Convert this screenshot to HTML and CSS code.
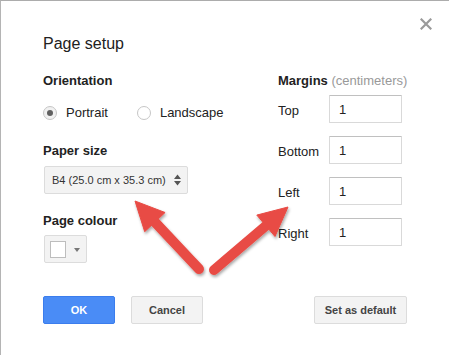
FILE: index.html
```html
<!DOCTYPE html>
<html lang="en">
<head>
    <meta charset="UTF-8">
    <meta name="viewport" content="width=device-width, initial-scale=1.0">
    <title>Page setup</title>
    <link rel="stylesheet" href="styles.css">
</head>
<body>
    <div class="dialog">
        <div class="dialog-header">
            <h1 class="dialog-title">Page setup</h1>
            <button class="close" aria-label="Close">
                <svg width="12" height="12" viewBox="0 0 12 12">
                    <path d="M1.5 1.5 L10.5 10.5 M10.5 1.5 L1.5 10.5" stroke="#9a9a9a" stroke-width="2.2" stroke-linecap="square"/>
                </svg>
            </button>
        </div>

        <div class="dialog-body">
            <div class="col-left">
                <div class="section-label">Orientation</div>
                <div class="radio-row">
                    <label class="radio portrait"><span class="radio-circle checked"></span>Portrait</label>
                    <label class="radio"><span class="radio-circle"></span>Landscape</label>
                </div>

                <div class="section-label paper-label">Paper size</div>
                <div class="select">
                    <span>B4 (25.0 cm x 35.3 cm)</span>
                    <svg width="7" height="12" viewBox="0 0 7 12">
                        <path d="M0 5 L3.5 0.5 L7 5 Z M0 7 L3.5 11.5 L7 7 Z" fill="#555"/>
                    </svg>
                </div>

                <div class="section-label colour-label">Page colour</div>
                <div class="colour-btn">
                    <span class="swatch"></span>
                    <span class="caret"></span>
                </div>
            </div>

            <div class="col-right">
                <div class="section-label">Margins <span class="unit">(centimeters)</span></div>
                <div class="margin-row"><span class="margin-name">Top</span><input type="text" value="1"></div>
                <div class="margin-row"><span class="margin-name">Bottom</span><input type="text" value="1"></div>
                <div class="margin-row"><span class="margin-name">Left</span><input type="text" value="1"></div>
                <div class="margin-row"><span class="margin-name">Right</span><input type="text" value="1"></div>
            </div>
        </div>

        <div class="dialog-footer">
            <button class="btn btn-primary">OK</button>
            <button class="btn btn-cancel">Cancel</button>
            <button class="btn btn-default">Set as default</button>
        </div>

        <!-- annotation arrows drawn over the dialog -->
        <svg class="arrows" width="449" height="355" viewBox="0 0 449 355">
            <defs>
                <filter id="shadow" x="-20%" y="-20%" width="150%" height="150%">
                    <feDropShadow dx="1" dy="2" stdDeviation="1.6" flood-color="#000" flood-opacity="0.35"/>
                </filter>
            </defs>
            <g fill="#e84c45" stroke="#e84c45" filter="url(#shadow)">
                <line x1="152" y1="219" x2="199" y2="269" stroke-width="10" stroke-linecap="round"/>
                <polygon points="135,201 144.7,231.7 165.1,212.5" stroke-width="1" stroke-linejoin="round"/>
                <line x1="268" y1="224" x2="214" y2="270" stroke-width="10" stroke-linecap="round"/>
                <polygon points="288,207 275,236.5 256.8,215.1" stroke-width="1" stroke-linejoin="round"/>
            </g>
        </svg>
    </div>
</body>
</html>
```

FILE: styles.css
```css
body {
    margin: 0;
    background-color: #fff;
    font-family: 'Liberation Sans', Arial, sans-serif;
    color: #222;
}
.dialog {
    position: relative;
    height: 354px;
    padding: 0 17px 0 42px;
    border-top: 1px solid #acacac;
    border-left: 1px solid #b4b4b4;
    overflow: hidden;
}
.dialog-header {
    display: flex;
    justify-content: space-between;
    align-items: flex-start;
}
.dialog-title {
    margin: 33px 0 0;
    font-size: 16px;
    font-weight: normal;
    line-height: 20px;
    color: #212121;
}
.close {
    margin-top: 17px;
    padding: 0;
    border: none;
    background: none;
    width: 12px;
    height: 12px;
    line-height: 0;
    cursor: pointer;
}
.dialog-body {
    display: grid;
    grid-template-columns: 235px 1fr;
    margin-top: 19px;
}
.section-label {
    font-size: 13px;
    font-weight: bold;
    line-height: 16px;
}
.unit {
    font-weight: normal;
    color: #999;
}
.radio-row {
    display: flex;
    align-items: center;
    height: 16px;
    margin-top: 16px;
    font-size: 13px;
}
.radio {
    display: flex;
    align-items: center;
    gap: 9px;
    line-height: 16px;
}
.portrait {
    margin-right: 29px;
}
.radio-circle {
    box-sizing: border-box;
    width: 14px;
    height: 14px;
    border: 1px solid #c6c6c6;
    border-radius: 50%;
    background-color: #fff;
    position: relative;
}
.radio-circle.checked {
    background-color: #f1f1f1;
}
.radio-circle.checked::after {
    content: "";
    position: absolute;
    left: 3px;
    top: 3px;
    width: 6px;
    height: 6px;
    border-radius: 50%;
    background-color: #606060;
}
.paper-label {
    margin-top: 22px;
}
.select {
    box-sizing: border-box;
    display: flex;
    align-items: center;
    justify-content: space-between;
    width: 144px;
    height: 28px;
    margin: 7px 0 0 1px;
    padding: 0 6px 0 7px;
    border: 1px solid #dcdcdc;
    border-radius: 2px;
    background-color: #f3f3f3;
    font-size: 11px;
    color: #333;
}
.colour-label {
    margin-top: 19px;
}
.colour-btn {
    box-sizing: border-box;
    display: flex;
    align-items: center;
    width: 43px;
    height: 28px;
    margin: 6px 0 0 1px;
    padding-left: 5px;
    border: 1px solid #dcdcdc;
    border-radius: 2px;
    background-color: #f3f3f3;
}
.swatch {
    box-sizing: border-box;
    width: 16px;
    height: 17px;
    border: 1px solid #bdbdbd;
    background-color: #fff;
}
.caret {
    margin: 2px 0 0 8px;
    width: 0;
    height: 0;
    border-left: 3.5px solid transparent;
    border-right: 3.5px solid transparent;
    border-top: 4px solid #777;
}
.col-right .section-label {
    margin-bottom: 6px;
}
.margin-row {
    display: flex;
    align-items: center;
    height: 28px;
    margin-bottom: 13px;
    font-size: 13px;
}
.margin-name {
    width: 51px;
    padding-top: 2px;
}
.margin-row input {
    box-sizing: border-box;
    width: 73px;
    height: 28px;
    padding: 0 0 0 9px;
    border: 1px solid #d9d9d9;
    border-top-color: #c0c0c0;
    border-radius: 1px;
    font-family: inherit;
    font-size: 13px;
    color: #222;
}
.dialog-footer {
    display: flex;
    margin: 33px 25px 0 0;
}
.btn {
    box-sizing: border-box;
    height: 28px;
    min-width: 72px;
    padding: 0 8px;
    border: 1px solid #dcdcdc;
    border-radius: 2px;
    background-color: #f3f3f3;
    font-family: inherit;
    font-size: 11px;
    font-weight: bold;
    color: #444;
    cursor: pointer;
}
.btn-primary {
    background-color: #4a8cf6;
    border-color: #3b7ded;
    color: #fff;
}
.btn-cancel {
    margin-left: 16px;
}
.btn-default {
    margin-left: auto;
    width: 93px;
}
.arrows {
    position: absolute;
    left: -1px;
    top: -1px;
    pointer-events: none;
}
```
